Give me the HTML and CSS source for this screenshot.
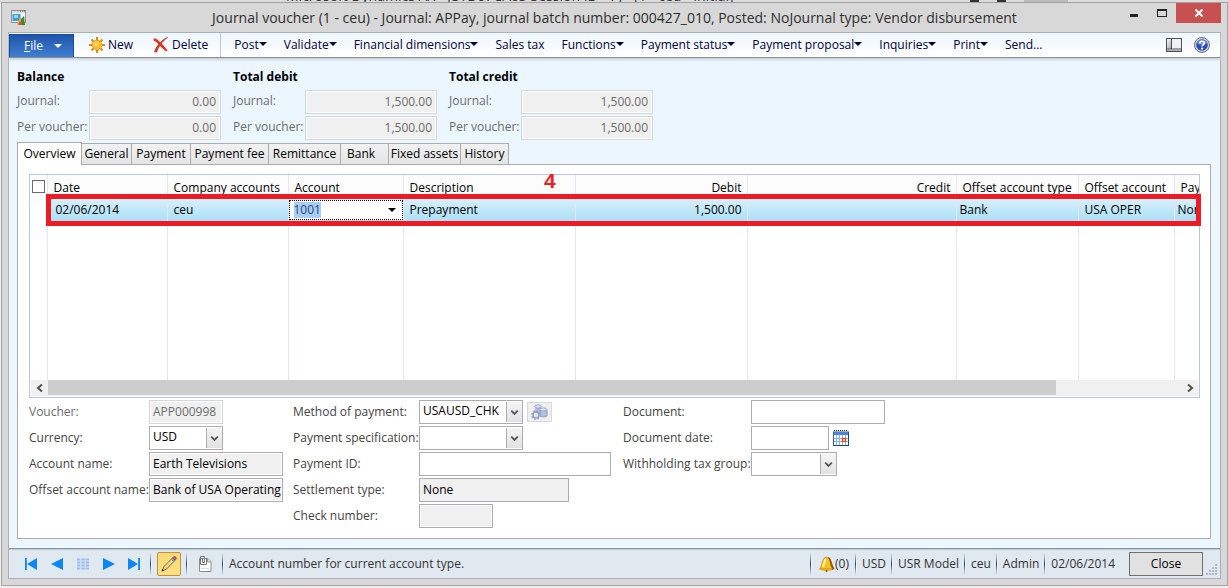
FILE: index.html
```html
<!DOCTYPE html>
<html lang="en">
<head>
<meta charset="utf-8">
<title>Journal voucher</title>
<link rel="stylesheet" href="styles.css">
</head>
<body>
<div class="desktop">
<div class="behind" aria-hidden="true">
  <span class="behind-title">Microsoft Dynamics AX - [STD07CA03 Session ID - 7] - [1 - ceu - Initial]</span>
  <span class="behind-buttons"><i class="b-min"></i><i class="b-max"></i><i class="b-close"></i></span>
</div>
<div class="window">
  <header class="titlebar">
    <svg class="app-icon" width="16" height="16" viewBox="0 0 16 16"><rect x=".5" y=".5" width="14" height="12" fill="#f4f6f8" stroke="#8a9097"/><path d="M1 2h13" stroke="#b8bec4"/><path d="M9 1h1M11 1h1M13 1h1" stroke="#555"/><rect x="1.500" y="4" width="8" height="7" fill="#3e9bd3"/><rect x="3" y="5" width="4" height="3" fill="#9bd0ee"/><path d="M6 15l3-8 3 8z" fill="#f0a51e"/><path d="M10 15V9l3-3 1 9z" fill="#3d8c34"/><path d="M8 12h3v3H8z" fill="#c9562c"/></svg>
    <h1>Journal voucher (1 - ceu) - Journal: APPay, journal batch number: 000427_010, Posted: NoJournal type: Vendor disbursement</h1>
    <div class="caption-buttons">
      <button type="button" aria-label="Minimize"><svg width="10" height="10"><path d="M1 6h8v3H1z" fill="#222"/></svg></button>
      <button type="button" aria-label="Maximize"><svg width="10" height="10"><path d="M0 1h10v8H0zM1 3v5h8V3z" fill="#222" fill-rule="evenodd"/></svg></button>
      <button type="button" class="x" aria-label="Close window"><svg width="10" height="10"><path d="M1.500 1.500l7 7M8.500 1.500l-7 7" stroke="#fff" stroke-width="2"/></svg></button>
    </div>
  </header>
  <div class="client">
    <nav class="toolbar">
      <button type="button" class="file"><span><u>F</u>ile</span><i class="caret"></i></button>
      <button type="button" class="act new"><svg width="16" height="16" viewBox="0 0 16 16"><path d="M8 0v16M0 8h16M2.500 2.500l11 11M13.500 2.500l-11 11" stroke="#d98a1c" stroke-width="2"/><circle cx="8" cy="8" r="4.800" fill="#fcc02c" stroke="#f0a020"/><circle cx="7" cy="7" r="2" fill="#ffe27a"/></svg>New</button>
      <button type="button" class="act"><svg width="16" height="16" viewBox="0 0 16 16"><path d="M.5 1.500C4 1 6 4 8.500 6.500c2 2 4 4 6 7l-1.500 1C11 12.500 9 11 6.500 8.500 4.500 6 2.500 4 .5 3.500z" fill="#e0301e"/><path d="M15 .5C11.500 3 9 6 7 9c-1 1.500-2.500 4-3 6.500l-3-.5C2 11.500 4 8.500 6.500 6 9 3 12 1 14.500 0z" fill="#c5402f"/></svg>Delete</button>
      <div class="menus">
        <button type="button">Post<i class="caret"></i></button>
        <button type="button">Validate<i class="caret"></i></button>
        <button type="button">Financial dimensions<i class="caret"></i></button>
        <button type="button">Sales tax</button>
        <button type="button">Functions<i class="caret"></i></button>
        <button type="button">Payment status<i class="caret"></i></button>
        <button type="button">Payment proposal<i class="caret"></i></button>
        <button type="button">Inquiries<i class="caret"></i></button>
        <button type="button">Print<i class="caret"></i></button>
        <button type="button">Send...</button>
      </div>
      <div class="tools">
        <button type="button" aria-label="Layout"><svg width="16" height="14"><defs><linearGradient id="lg" x2="1" y2="1"><stop offset="0" stop-color="#fff"/><stop offset="1" stop-color="#9aa3ae"/></linearGradient></defs><rect x=".5" y=".5" width="15" height="13" fill="#eef0f3" stroke="#4b5158"/><rect x="1" y="1" width="4" height="10" fill="url(#lg)"/><path d="M5.500 1v10M1 11h14" stroke="#4b5158"/><path d="M1 12.500h14" stroke="#a8b0b8"/></svg></button>
        <button type="button" aria-label="Help"><svg width="16" height="16"><circle cx="8" cy="8" r="7.500" fill="#d0d2d6" stroke="#6e7277"/><circle cx="8" cy="8" r="5.800" fill="#2b4fb8"/><path d="M3 6.500a5.200 5.200 0 0 1 10 0Q8 9 3 6.500z" fill="#6d8ee0"/><path d="M5.800 6.400C5.800 3.500 10.300 3.600 10.300 6.200 10.300 7.700 8.100 7.700 8.100 9.400" fill="none" stroke="#fff" stroke-width="1.700"/><circle cx="8.100" cy="11.600" r="1.100" fill="#fff"/></svg></button>
      </div>
    </nav>
    <main>
      <section class="totals">
        <fieldset><legend>Balance</legend>
          <label for="b1">Journal:</label><input id="b1" disabled value="0.00">
          <label for="b2">Per voucher:</label><input id="b2" disabled value="0.00"></fieldset>
        <fieldset><legend>Total debit</legend>
          <label for="d1">Journal:</label><input id="d1" disabled value="1,500.00">
          <label for="d2">Per voucher:</label><input id="d2" disabled value="1,500.00"></fieldset>
        <fieldset><legend>Total credit</legend>
          <label for="c1">Journal:</label><input id="c1" disabled value="1,500.00">
          <label for="c2">Per voucher:</label><input id="c2" disabled value="1,500.00"></fieldset>
      </section>
      <div class="tabs" role="tablist">
        <button type="button" role="tab" aria-selected="true" class="w64">Overview</button>
        <button type="button" role="tab" class="w50">General</button>
        <button type="button" role="tab" class="w58">Payment</button>
        <button type="button" role="tab" class="w78">Payment fee</button>
        <button type="button" role="tab" class="w72">Remittance</button>
        <button type="button" role="tab" class="w48 left">Bank</button>
        <button type="button" role="tab" class="w72">Fixed assets</button>
        <button type="button" role="tab" class="w48">History</button>
      </div>
      <section class="panel">
        <div class="grid">
          <div class="grid-body">
            <table>
              <colgroup><col class="c-sel"><col class="c-date"><col class="c-comp"><col class="c-acc"><col class="c-desc"><col class="c-desc"><col class="c-cred"><col class="c-offt"><col class="c-offa"><col></colgroup>
              <thead><tr><th class="sel"><input type="checkbox" aria-label="Select all"></th><th>Date</th><th>Company accounts</th><th>Account</th><th>Description</th><th class="num">Debit</th><th class="num">Credit</th><th>Offset account type</th><th>Offset account</th><th class="last">Payment</th></tr></thead>
              <tbody>
                <tr class="current"><td class="sel"></td><td>02/06/2014</td><td>ceu</td><td class="edit"><button type="button"><mark>1001</mark><i class="caret"></i></button></td><td>Prepayment</td><td class="num">1,500.00</td><td></td><td class="tight">Bank</td><td>USA OPER</td><td class="tight">None</td></tr>
                <tr class="rest"><td></td><td></td><td></td><td></td><td></td><td></td><td></td><td></td><td></td><td></td></tr>
              </tbody>
            </table>
          </div>
          <div class="scroll">
            <button type="button" aria-label="Scroll left"><svg width="8" height="8"><path d="M6 .5L2 4l4 3.500" fill="none" stroke="#505050" stroke-width="2"/></svg></button>
            <div class="track"><div class="thumb"></div></div>
            <button type="button" aria-label="Scroll right"><svg width="8" height="8"><path d="M2 .5L6 4 2 7.500" fill="none" stroke="#505050" stroke-width="2"/></svg></button>
          </div>
          <div class="callout"></div>
          <div class="callout-number">4</div>
        </div>
        <div class="details">
          <div class="col one">
            <label for="vo" class="dim">Voucher:</label><input id="vo" class="f74" disabled value="APP000998">
            <label for="cu">Currency:</label><span class="combo f74"><select id="cu"><option>USD</option></select><svg viewBox="0 0 16 20"><path d="M4.500 8.500L8 12l3.500-3.500" /></svg></span>
            <label for="an">Account name:</label><input id="an" class="f134 ro" readonly value="Earth Televisions">
            <label for="on">Offset account name:</label><input id="on" class="f134 ro" readonly value="Bank of USA Operating">
          </div>
          <div class="col two">
            <label for="mp">Method of payment:</label><div class="pair"><span class="combo f104"><select id="mp"><option>USAUSD_CHK</option></select><svg viewBox="0 0 16 20"><path d="M4.500 8.500L8 12l3.500-3.500" /></svg></span><button type="button" class="db" aria-label="Method setup"><svg width="17" height="16"><path d="M4 2.500v6h6v-6z" fill="#b3c0dc"/><ellipse cx="7" cy="2.500" rx="3.300" ry="1.600" fill="#dde4f2" stroke="#93a3c8"/><path d="M9 5.500v6.500q3.500 2 7 0V5.500z" fill="#b3c2e3" stroke="#8d9dc6"/><ellipse cx="12.500" cy="5.500" rx="3.500" ry="1.600" fill="#e4eaf6" stroke="#93a3c8"/><circle cx="5" cy="11" r="3" fill="#e6ebf5" stroke="#8f9ec0" stroke-width="1.500"/><circle cx="5" cy="11" r="4.300" fill="none" stroke="#8f9ec0" stroke-width="1.200" stroke-dasharray="1.700 1.700"/></svg></button></div>
            <label for="ps">Payment specification:</label><span class="combo f104"><select id="ps"><option></option></select><svg viewBox="0 0 16 20"><path d="M4.500 8.500L8 12l3.500-3.500" /></svg></span>
            <label for="pi">Payment ID:</label><input id="pi" class="f192">
            <label for="st">Settlement type:</label><input id="st" class="f150 flat" readonly value="None">
            <label for="cn">Check number:</label><input id="cn" class="f74 ro" readonly>
          </div>
          <div class="col three">
            <label for="do">Document:</label><input id="do" class="f134">
            <label for="dd">Document date:</label><div class="pair"><input id="dd" class="f78"><button type="button" class="cal" aria-label="Pick date"><svg width="16" height="16"><rect x=".5" y="2" width="15" height="13.500" fill="#fff" stroke="#2f65b5"/><path d="M1 2h14v3H1z" fill="#4c85dd"/><path d="M1 .5h14" stroke="#222" stroke-dasharray="1 1"/><path d="M1 1.500h14" stroke="#aaa" stroke-dasharray="1 1"/><path d="M3.500 5v10M6.500 5v10M9.500 5v10M12.500 5v10M1 8.500h14M1 11.500h14" stroke="#8fb0e0"/><rect x="9.500" y="8.500" width="3" height="3" fill="#fff" stroke="#e6501e" stroke-width="1.400"/><path d="M15.500 3v13M0 15.500h16" stroke="#1d468c"/></svg></button></div>
            <label for="wt">Withholding tax group:</label><span class="combo f86"><select id="wt"><option></option></select><svg viewBox="0 0 16 20"><path d="M4.500 8.500L8 12l3.500-3.500" /></svg></span>
          </div>
        </div>
      </section>
    </main>
    <footer class="status">
      <div class="nav">
        <button type="button" aria-label="First"><svg width="14" height="12"><path d="M1 0h1.800v12H1zM13 0v12L3 6z" fill="#0a86f5"/></svg></button>
        <button type="button" aria-label="Previous"><svg width="14" height="12"><path d="M13 0v12L1 6z" fill="#0a86f5"/></svg></button>
        <button type="button" aria-label="Grid view"><svg width="14" height="12"><path d="M1 1.500h12M1 4.500h12M1 7.500h12M1 10.500h12" stroke="#9bbcf0" stroke-width="2" stroke-dasharray="3.400 .9"/></svg></button>
        <button type="button" aria-label="Next"><svg width="14" height="12"><path d="M1 0v12l12-6z" fill="#0a86f5"/></svg></button>
        <button type="button" aria-label="Last"><svg width="14" height="12"><path d="M10.200 0H12v12h-1.800zM0 0v12l10-6z" fill="#0a86f5"/></svg></button>
      </div>
      <i class="sep"></i>
      <button type="button" class="pencil" aria-label="Edit"><svg width="18" height="18"><path d="M2 16l2-4.500L12.500 3l2.500 2.300L6.500 14z" fill="#f9dc86" stroke="#5a5240" stroke-width=".9"/><path d="M12.500 3l1.500-1.500q2.500 0 2.500 2.300L15 5.300z" fill="#d0506a" stroke="#555" stroke-width=".6"/><path d="M11.500 4l2.500 2.300" stroke="#5ba0dd" stroke-width="1.600"/><path d="M1.500 16.500l1-2.500 1.400 1.300z" fill="#222"/></svg></button>
      <i class="sep"></i>
      <button type="button" class="clip" aria-label="Attachments"><svg width="14" height="16"><path d="M1.500 2.500h8.500l3 3v10H1.500z" fill="#fdfdfd" stroke="#8a8a8a"/><path d="M9.500 2.500v3.500h3.500" fill="#e4e4e4" stroke="#999"/><path d="M8.500 2v6.500h-6V.500h4v6h-2V3" fill="none" stroke="#777"/><path d="M3 12.500h8" stroke="#e0e0e0"/></svg></button>
      <i class="sep"></i>
      <p>Account number for current account type.</p>
      <div class="info">
        <i class="sep"></i>
        <button type="button" class="bell"><svg width="16" height="16"><path d="M9 1c4 1 3 6 6.500 12l-4 1.500z" fill="#8a4d14"/><path d="M.5 13c3-2 1.500-10.500 6.500-12 5 1 3.500 8.500 6.500 12z" fill="#f7c21e" stroke="#b9780d" stroke-width=".6"/><path d="M4 11c1.500-3 1-6 3-8" stroke="#fff3a8" stroke-width="2" fill="none"/><ellipse cx="7" cy="13.300" rx="6.500" ry="1.400" fill="#e8a616"/><circle cx="7.500" cy="15" r="1" fill="#8a5208"/></svg>(0)</button>
        <i class="sep"></i><span>USD</span><i class="sep"></i><span>USR Model</span><i class="sep"></i><span>ceu</span><i class="sep"></i><span>Admin</span><i class="sep"></i><span>02/06/2014</span>
      </div>
      <button type="button" class="close">Close</button>
      <svg class="grip" width="12" height="12"><path d="M9 1h2M9 4h2M9 7h2M9 10h2M6 4h2M6 7h2M6 10h2M3 7h2M3 10h2M0 10h2" stroke="#aeb8c8" stroke-width="2"/></svg>
    </footer>
  </div>
</div>
</div>
</body>
</html>
```
FILE: styles.css
```css
* { box-sizing: border-box; }
body {
  margin: 0;
  font: 12px/16px "Open Sans", "Noto Sans", sans-serif;
  color: #000;
}
button, input, select { font: inherit; color: inherit; margin: 0; border-radius: 0; }
button { padding: 0; border: 0; background: none; white-space: nowrap; }
svg { display: block; flex: none; }
.desktop {
  position: relative;
  display: flex;
  min-height: 100vh;
  padding: 2px 0 2px 1px;
  background: #eef1f4;
}
.behind {
  position: absolute;
  inset: 0 0 auto 0;
  height: 2px;
  overflow: hidden;
  background: #dcdcdc;
}
.behind-title { position: absolute; left: 286px; bottom: -4px; font-size: 14px; line-height: 20px; white-space: nowrap; color: #333; }
.behind-buttons { position: absolute; left: 970px; top: 0; display: flex; gap: 18px; }
.behind-buttons i { height: 2px; width: 9px; background: #333; }
.behind-buttons .b-close { width: 44px; background: #bbb; }
.window {
  position: relative;
  flex: 1;
  display: flex;
  flex-direction: column;
  padding: 0 6px;
  padding-bottom: 6px;
  border: 1px solid #a2a2a2;
  background: #d8d8d8;
}
.titlebar { display: flex; align-items: center; height: 29px; padding-left: 3px; }
.titlebar h1 { flex: 1; margin: 0; padding-left: 82px; font-size: 14px; line-height: 28px; font-weight: 400; text-align: center; color: #2e2e2e; white-space: nowrap; }
.caption-buttons { display: flex; align-self: flex-start; gap: 1px; }
.caption-buttons button { display: grid; place-items: center; width: 27px; height: 20px; }
.caption-buttons .x { width: 45px; background: #c75050; }
.client { flex: 1; display: flex; flex-direction: column; border: 1px solid #acb0b4; background: #ebf6ff; }

.toolbar {
  display: flex;
  height: 25px;
  background: linear-gradient(#edf6fe, #fff);
  border-bottom: 1px solid #8c8f93;
  box-shadow: 0 2px 2px #c9d3dc;
  color: #00003c;
}
.caret { width: 0; border: 4px solid transparent; border-top-color: currentColor; border-bottom: 0; }
.file { display: flex; align-items: center; justify-content: space-between; width: 65px; margin-top: 1px; padding: 0 11px 0 14px; border: 1px solid #1a4a9c; border-bottom: 0; background: linear-gradient(#1f55ab, #3f7fd2); color: #fff; }
.act { display: flex; align-items: center; gap: 3px; margin-left: 20px; }
.new { margin-left: 15px; }
.menus { display: flex; gap: 17px; margin-left: 12px; padding-left: 13px; border-left: 1px solid #c4c8ce; }
.menus button { display: flex; align-items: center; }
.menus .caret { margin-bottom: 2px; }
.tools { display: flex; align-items: center; gap: 12px; margin-left: auto; padding-right: 10px; }

main { flex: 1; display: flex; flex-direction: column; padding: 10px 9px 9px 8px; }
.totals { display: flex; gap: 12px; }
fieldset { display: grid; grid-template-columns: 72px 132px; grid-auto-rows: 24px; align-items: center; row-gap: 2px; margin: 0; padding: 0; border: 0; color: #6d6d6d; }
fieldset label { padding-bottom: 2px; white-space: nowrap; }
legend { padding: 0; height: 22px; line-height: 18px; font-weight: 700; color: #000; }
input:not([type=checkbox]) { height: 24px; min-width: 0; padding: 0 4px 2px; border: 1px solid #abadb3; background: #fff; outline: 0; }
input:disabled { border-color: #d4d7da; background: #f0f0f0; color: #6d6d6d; box-shadow: inset 0 0 0 1px #fff; }
.totals input { text-align: right; }

.tabs { display: flex; align-items: flex-end; height: 24px; }
.tabs button { height: 21px; border: 1px solid #acacac; border-bottom: 0; border-left: 0; background: linear-gradient(#f2f2f2, #e4e4e4); }
.tabs [aria-selected] { position: relative; height: 23px; margin-bottom: -1px; padding-bottom: 1px; border-left: 1px solid #acacac; background: #fff; }
.tabs .left { padding-left: 6px; text-align: left; }
.w64 { width: 65px; } .w50 { width: 50px; } .w58 { width: 59px; } .w78 { width: 78px; } .w72 { width: 72px; } .w48 { width: 48px; }
.panel { flex: 1; display: flex; flex-direction: column; padding: 9px 10px 10px 11px; border: 1px solid #acacac; background: #fff; }

.grid { position: relative; flex: 1; display: flex; flex-direction: column; min-height: 120px; border: 1px solid #b9c9da; }
.grid-body { flex: 1; display: flex; overflow: hidden; }
table { width: 100%; table-layout: fixed; border-collapse: collapse; }
.c-sel { width: 17px; } .c-date { width: 120px; } .c-comp { width: 121px; } .c-acc { width: 115px; } .c-desc { width: 172px; } .c-cred { width: 209px; } .c-offt { width: 122px; } .c-offa { width: 96px; }
th, td { padding: 0 5px 0 6px; border-left: 1px solid #dfe9f4; text-align: left; font-weight: 400; white-space: nowrap; overflow: hidden; }
th:first-child, td:first-child { border-left: 0; padding: 0; }
th { height: 23px; padding-top: 2px; background: #fcfcfc; }
.current { height: 24px; }
.current td:not(.sel) { background: linear-gradient(#d9f0fb, #a8dff6); }
.current td:nth-child(2) { padding-left: 8px; }
.tight.tight { padding-left: 3px; padding-right: 0; }
.last { padding-right: 0; }
.num { text-align: right; }
th input { display: block; appearance: none; width: 13px; height: 13px; margin: 0 0 0 2px; border: 1px solid #6b6b6b; background: #fff; }
.current .edit { padding: 0; }
.edit button { display: flex; align-items: center; justify-content: space-between; width: 100%; height: 20px; padding: 0 6px 0 4px; border: 1px dotted #000; background: #fff; }
mark { background: #a8cdf8; color: #2a4a6e; }
.scroll { display: flex; height: 16px; margin: 0 1px 1px; background: #f0f0f0; }
.scroll button { display: grid; place-items: center; width: 17px; }
.track { flex: 1; }
.thumb { width: 89%; height: 15px; background: #cdcdcd; }
.callout { position: absolute; inset: 19px -2px auto 16px; height: 32px; border: 5px solid #ed1c24; }
.callout-number { position: absolute; left: 514px; top: -6px; font: 700 21px/24px "Liberation Sans", Arial, sans-serif; color: #ed1c24; }

.details { display: flex; margin-top: 2px; color: #444; }
.col { display: grid; grid-auto-rows: 24px; row-gap: 2px; align-content: start; align-items: center; }
.col label { white-space: nowrap; }
.one { grid-template-columns: 120px 144px; }
.two { grid-template-columns: 126px 204px; }
.three { grid-template-columns: 128px auto; }
.col input, .col select { color: #000; }
.dim, .col input:disabled { color: #6d6d6d; }
.col input { padding-left: 3px; padding-right: 0; }
input.ro { background: #f0f0f0; box-shadow: inset 0 0 0 1px #fff; }
input.flat { background: #f0f0f0; }
.f74 { width: 74px; } .f78 { width: 78px; } .f86 { width: 86px; } .f104 { width: 104px; } .f134 { width: 134px; } .f150 { width: 150px; } .f192 { width: 192px; }
.pair { display: flex; align-items: center; gap: 4px; }
.combo { position: relative; display: block; height: 24px; }
.combo select { display: block; appearance: none; width: 100%; height: 24px; padding: 0 17px 2px 3px; border: 1px solid #abadb3; background: #fff; }
.combo svg { position: absolute; top: 2px; right: 1px; width: 16px; height: 20px; border-left: 1px solid #abadb3; background: linear-gradient(#f4f4f4, #e2e2e2); pointer-events: none; fill: none; stroke: #555; stroke-width: 2; }
.db { display: grid; place-items: center; width: 25px; height: 20px; border: 1px solid #d9d9d9; background: #efefef; }

.status { display: flex; align-items: center; height: 30px; border-top: 1px solid #8996a5; background: #e0e8f0; color: #333; box-shadow: inset 0 1px #c0ccd8; }
.status p { flex: 1; margin: 0 0 0 5px; }
.nav { display: flex; gap: 12px; margin: 0 8px 0 15px; }
.sep { width: 2px; height: 22px; background: linear-gradient(90deg, #1c4270 50%, #f4f8fc 50%); -webkit-mask: linear-gradient(transparent, #000, transparent); mask: linear-gradient(transparent, #000, transparent); }
.pencil { display: grid; place-items: center; width: 24px; height: 24px; margin: 0 5px; border: 1px solid #c2913c; border-radius: 2px; background: linear-gradient(#fbd877, #ffe080); }
.clip { margin: 0 10px; }
.bell { display: flex; align-items: center; margin: 0 6px 0 7px; }
.info { display: flex; align-items: center; }
.info span { margin: 0 5px; }
.close { width: 74px; height: 24px; margin: 0 3px 0 9px; border: 1px solid #707070; background: #e1e1e1; color: #000; }
.grip { align-self: flex-end; margin: 0 2px 2px 0; }
```
